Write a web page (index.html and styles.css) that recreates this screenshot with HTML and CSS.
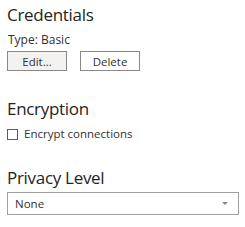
FILE: index.html
```html
<!DOCTYPE html>
<html lang="en">
<head>
    <meta charset="UTF-8">
    <title>Data source settings</title>
    <link rel="stylesheet" href="styles.css">
</head>
<body>

<div class="panel">
    <section class="group credentials">
        <h2 class="group-title">Credentials</h2>
        <div class="cred-type">Type: Basic</div>
        <div class="btn-row">
            <button class="btn btn-edit">Edit...</button>
            <button class="btn">Delete</button>
        </div>
    </section>

    <section class="group encryption">
        <h2 class="group-title">Encryption</h2>
        <label class="check">
            <span class="check-box"></span>
            <span>Encrypt connections</span>
        </label>
    </section>

    <section class="group privacy">
        <h2 class="group-title">Privacy Level</h2>
        <div class="dropdown">
            <span>None</span>
            <svg class="caret" width="6" height="4" viewBox="0 0 6 4"><path d="M0 0h6L3 3z" fill="#8a8886"/></svg>
        </div>
    </section>
</div>

</body>
</html>
```

FILE: styles.css
```css
/* Base page */
body {
    margin: 0;
    background: #fff;
    color: #323130;
    font-family: "Open Sans", "Liberation Sans", sans-serif;
}

.panel {
    padding: 0 6px 0 7px;
}

/* Section headings */
.group-title {
    margin: 0;
    font-size: 17px;
    font-weight: 400;
    line-height: 24px;
    color: #252423;
    letter-spacing: -0.3px;
}

.credentials {
    padding-top: 3px;
}

.encryption {
    margin-top: 26px;
}

.privacy {
    margin-top: 25px;
}

.cred-type {
    margin-top: 5px;
    font-size: 12px;
    line-height: 16px;
    padding-left: 1px;
}

/* Buttons */
.btn-row {
    display: flex;
    gap: 13px;
    margin-top: 3px;
}

.btn {
    height: 20px;
    width: 60px;
    padding: 0;
    border: 1px solid #8a8886;
    background: #fff;
    color: #323130;
    font-family: inherit;
    font-size: 11.5px;
}

.btn-edit {
    background: #f3f2f1;
}

/* Checkbox */
.check {
    display: flex;
    align-items: center;
    gap: 6px;
    margin-top: 6px;
    font-size: 11.5px;
    line-height: 14px;
}

.check-box {
    width: 9px;
    height: 9px;
    border: 1px solid #605e5c;
}

/* Select */
.dropdown {
    display: flex;
    align-items: center;
    justify-content: space-between;
    height: 21px;
    margin-top: 2px;
    padding: 0 10px 0 7px;
    border: 1px solid #a19f9d;
    font-size: 11.5px;
}
```
